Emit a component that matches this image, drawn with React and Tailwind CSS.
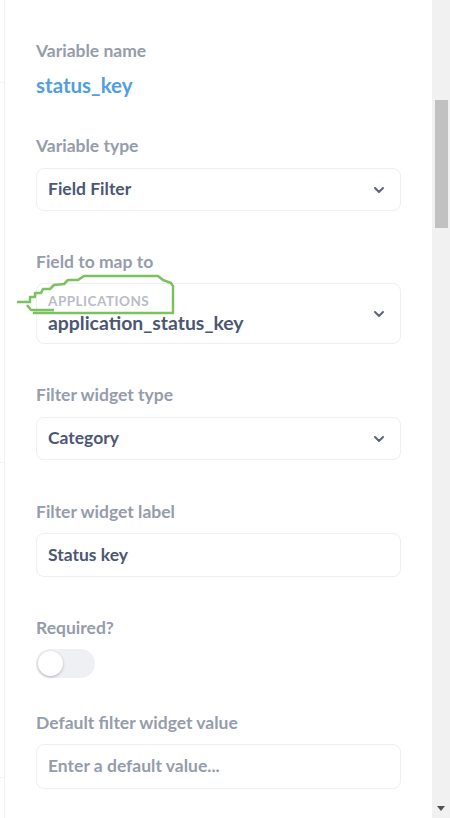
import { ChevronDown } from 'lucide-react';

const font = { fontFamily: 'Lato, "Noto Sans", sans-serif' };

function Label({ children, className = '' }) {
  return <div className={`text-[17.5px] leading-[20px] font-bold text-[#959cab] ${className}`}>{children}</div>;
}

function SelectBox({ value, className = '' }) {
  return (
    <div className={`h-[43px] rounded-lg border border-[#eeeff2] flex items-center justify-between pl-[11px] pr-[13px] ${className}`}>
      <span className="text-[17.5px] font-bold text-[#4c5773]">{value}</span>
      <ChevronDown className="w-[16px] h-[16px] text-[#5b6478]" strokeWidth={3} />
    </div>
  );
}

function TextBox({ value, placeholder, className = '' }) {
  return (
    <div className={`h-[44px] rounded-lg border border-[#eeeff2] flex items-center pl-[11px] ${className}`}>
      {value ? (
        <span className="text-[17.5px] font-bold text-[#4c5773]">{value}</span>
      ) : (
        <span className="text-[17.5px] font-bold text-[#959cab]">{placeholder}</span>
      )}
    </div>
  );
}

export default function App() {
  return (
    <div className="relative flex h-[818px] w-[450px] overflow-hidden bg-white" style={font}>
      {/* edge of the page behind the panel */}
      <div className="w-[4px] flex flex-col">
        <div className="h-[82px]" />
        <div className="h-px bg-[#f1f2f4]" />
        <div className="h-[379px]" />
        <div className="h-px bg-[#f1f2f4]" />
        <div className="h-[314px]" />
        <div className="h-px bg-[#f1f2f4]" />
      </div>

      <div className="flex-1 border-l border-[#eef0f3] pl-[31px] pr-[31px] pt-[41px]">
        <Label>Variable name</Label>
        <div className="mt-[12px] text-[20.5px] leading-[24px] font-bold text-[#509ee3]">status_key</div>

        <Label className="mt-[39px]">Variable type</Label>
        <SelectBox value="Field Filter" className="mt-[12px]" />

        <Label className="mt-[41px]">Field to map to</Label>
        <div className="mt-[11px] h-[61px] rounded-lg border border-[#eeeff2] flex items-center justify-between pl-[11px] pr-[13px]">
          <div className="flex flex-col">
            <span className="text-[13.5px] leading-[16px] font-bold tracking-[0.5px] text-[#b8bcc5]">APPLICATIONS</span>
            <span className="mt-[2px] text-[19.4px] leading-[23px] font-bold text-[#4c5773]">application_status_key</span>
          </div>
          <ChevronDown className="w-[16px] h-[16px] text-[#5b6478]" strokeWidth={3} />
        </div>

        <Label className="mt-[41px]">Filter widget type</Label>
        <SelectBox value="Category" className="mt-[12px]" />

        <Label className="mt-[42px]">Filter widget label</Label>
        <TextBox value="Status key" className="mt-[11px]" />

        <Label className="mt-[41px]">Required?</Label>
        <div className="mt-[11px] w-[59px] h-[29px] rounded-full bg-[#eef0f3] flex items-center pl-[2px]">
          <div className="w-[25px] h-[25px] rounded-full bg-white shadow-[0_1px_3px_rgba(0,0,0,0.25)]" />
        </div>

        <Label className="mt-[35px]">Default filter widget value</Label>
        <TextBox placeholder="Enter a default value..." className="mt-[11px] h-[45px]" />
      </div>

      {/* scrollbar */}
      <div className="w-[18px] bg-[#f1f1f1] flex flex-col items-center">
        <div className="h-[100px]" />
        <div className="w-[13px] h-[128px] bg-[#c1c1c1]" />
        <div className="flex-1" />
        <svg width="8" height="5" viewBox="0 0 8 5" className="mb-[7px]">
          <path d="M0 0 L8 0 L4 5 Z" fill="#505050" />
        </svg>
      </div>

      {/* hand-drawn highlight */}
      <svg className="absolute left-0 top-0 pointer-events-none" width="450" height="818">
        <path
          d="M17 302 L30 302 L30 297 L35 297 L35 293 L41 293 L43 289 L50 289 L54 285 L64 284 L68 280 L78 280 L84 276 L158 276 L163 280 L171 283 L173 286 L173 313 L33 313 M27 305 L31 310 L54 310"
          fill="none"
          stroke="#7bc25f"
          strokeWidth="2.5"
          strokeLinejoin="round"
        />
      </svg>
    </div>
  );
}
